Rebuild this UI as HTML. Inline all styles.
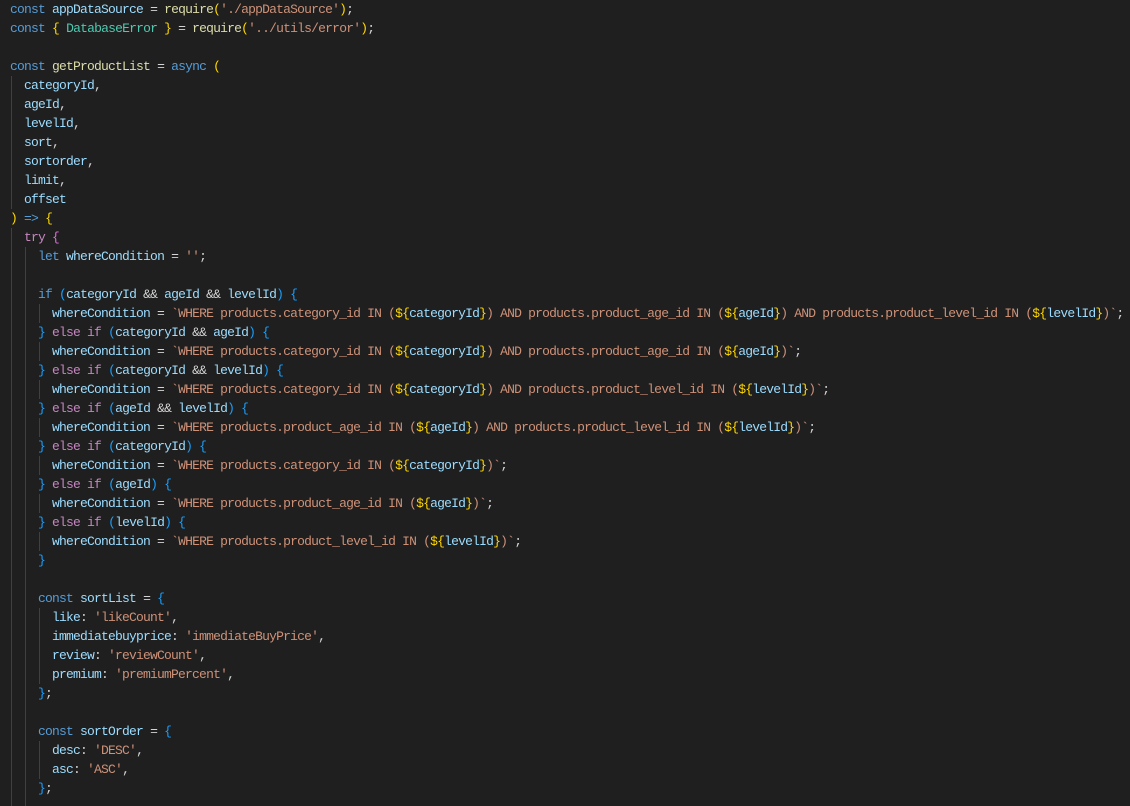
<!DOCTYPE html>
<html><head><meta charset="utf-8"><style>
html,body{margin:0;padding:0;background:#1f1f1f;width:1130px;height:806px;overflow:hidden}
#c{position:relative;font-family:"Liberation Mono",monospace;font-size:13px;letter-spacing:-0.8px;color:#d4d4d4}
.l{height:19px;line-height:19px;white-space:pre;padding-left:10px}
.k{color:#569cd6}.v{color:#9cdcfe}.f{color:#dcdcaa}.s{color:#ce9178}.t{color:#4ec9b0}
.c{color:#c586c0}.y{color:#ffd700}.p{color:#da70d6}.b{color:#179fff}.w{color:#d4d4d4}
.g{position:absolute;width:1px;background:#404040}
</style></head><body><div id="c">
<div class="g" style="left:11px;top:76px;height:133px"></div>
<div class="g" style="left:11px;top:228px;height:578px"></div>
<div class="g" style="left:25px;top:247px;height:559px"></div>
<div class="g" style="left:39px;top:304px;height:19px"></div>
<div class="g" style="left:39px;top:342px;height:19px"></div>
<div class="g" style="left:39px;top:380px;height:19px"></div>
<div class="g" style="left:39px;top:418px;height:19px"></div>
<div class="g" style="left:39px;top:456px;height:19px"></div>
<div class="g" style="left:39px;top:494px;height:19px"></div>
<div class="g" style="left:39px;top:532px;height:19px"></div>
<div class="g" style="left:39px;top:608px;height:76px"></div>
<div class="g" style="left:39px;top:741px;height:38px"></div>
<div class="l"><span class="k">const</span> <span class="v">appDataSource</span> = <span class="f">require</span><span class="y">(</span><span class="s">'./appDataSource'</span><span class="y">)</span>;</div>
<div class="l"><span class="k">const</span> <span class="y">{</span> <span class="t">DatabaseError</span> <span class="y">}</span> = <span class="f">require</span><span class="y">(</span><span class="s">'../utils/error'</span><span class="y">)</span>;</div>
<div class="l"></div>
<div class="l"><span class="k">const</span> <span class="f">getProductList</span> = <span class="k">async</span> <span class="y">(</span></div>
<div class="l">  <span class="v">categoryId</span>,</div>
<div class="l">  <span class="v">ageId</span>,</div>
<div class="l">  <span class="v">levelId</span>,</div>
<div class="l">  <span class="v">sort</span>,</div>
<div class="l">  <span class="v">sortorder</span>,</div>
<div class="l">  <span class="v">limit</span>,</div>
<div class="l">  <span class="v">offset</span></div>
<div class="l"><span class="y">)</span> <span class="k">=&gt;</span> <span class="y">{</span></div>
<div class="l">  <span class="c">try</span> <span class="p">{</span></div>
<div class="l">    <span class="k">let</span> <span class="v">whereCondition</span> = <span class="s">''</span>;</div>
<div class="l"></div>
<div class="l">    <span class="k">if</span> <span class="b">(</span><span class="v">categoryId</span> &amp;&amp; <span class="v">ageId</span> &amp;&amp; <span class="v">levelId</span><span class="b">)</span> <span class="b">{</span></div>
<div class="l">      <span class="v">whereCondition</span> = <span class="s">`WHERE products.category_id IN (</span><span class="y">${</span><span class="v">categoryId</span><span class="y">}</span><span class="s">) AND products.product_age_id IN (</span><span class="y">${</span><span class="v">ageId</span><span class="y">}</span><span class="s">) AND products.product_level_id IN (</span><span class="y">${</span><span class="v">levelId</span><span class="y">}</span><span class="s">)`</span>;</div>
<div class="l">    <span class="b">}</span> <span class="c">else if</span> <span class="b">(</span><span class="v">categoryId</span> &amp;&amp; <span class="v">ageId</span><span class="b">)</span> <span class="b">{</span></div>
<div class="l">      <span class="v">whereCondition</span> = <span class="s">`WHERE products.category_id IN (</span><span class="y">${</span><span class="v">categoryId</span><span class="y">}</span><span class="s">) AND products.product_age_id IN (</span><span class="y">${</span><span class="v">ageId</span><span class="y">}</span><span class="s">)`</span>;</div>
<div class="l">    <span class="b">}</span> <span class="c">else if</span> <span class="b">(</span><span class="v">categoryId</span> &amp;&amp; <span class="v">levelId</span><span class="b">)</span> <span class="b">{</span></div>
<div class="l">      <span class="v">whereCondition</span> = <span class="s">`WHERE products.category_id IN (</span><span class="y">${</span><span class="v">categoryId</span><span class="y">}</span><span class="s">) AND products.product_level_id IN (</span><span class="y">${</span><span class="v">levelId</span><span class="y">}</span><span class="s">)`</span>;</div>
<div class="l">    <span class="b">}</span> <span class="c">else if</span> <span class="b">(</span><span class="v">ageId</span> &amp;&amp; <span class="v">levelId</span><span class="b">)</span> <span class="b">{</span></div>
<div class="l">      <span class="v">whereCondition</span> = <span class="s">`WHERE products.product_age_id IN (</span><span class="y">${</span><span class="v">ageId</span><span class="y">}</span><span class="s">) AND products.product_level_id IN (</span><span class="y">${</span><span class="v">levelId</span><span class="y">}</span><span class="s">)`</span>;</div>
<div class="l">    <span class="b">}</span> <span class="c">else if</span> <span class="b">(</span><span class="v">categoryId</span><span class="b">)</span> <span class="b">{</span></div>
<div class="l">      <span class="v">whereCondition</span> = <span class="s">`WHERE products.category_id IN (</span><span class="y">${</span><span class="v">categoryId</span><span class="y">}</span><span class="s">)`</span>;</div>
<div class="l">    <span class="b">}</span> <span class="c">else if</span> <span class="b">(</span><span class="v">ageId</span><span class="b">)</span> <span class="b">{</span></div>
<div class="l">      <span class="v">whereCondition</span> = <span class="s">`WHERE products.product_age_id IN (</span><span class="y">${</span><span class="v">ageId</span><span class="y">}</span><span class="s">)`</span>;</div>
<div class="l">    <span class="b">}</span> <span class="c">else if</span> <span class="b">(</span><span class="v">levelId</span><span class="b">)</span> <span class="b">{</span></div>
<div class="l">      <span class="v">whereCondition</span> = <span class="s">`WHERE products.product_level_id IN (</span><span class="y">${</span><span class="v">levelId</span><span class="y">}</span><span class="s">)`</span>;</div>
<div class="l">    <span class="b">}</span></div>
<div class="l"></div>
<div class="l">    <span class="k">const</span> <span class="v">sortList</span> = <span class="b">{</span></div>
<div class="l">      <span class="v">like</span>: <span class="s">'likeCount'</span>,</div>
<div class="l">      <span class="v">immediatebuyprice</span>: <span class="s">'immediateBuyPrice'</span>,</div>
<div class="l">      <span class="v">review</span>: <span class="s">'reviewCount'</span>,</div>
<div class="l">      <span class="v">premium</span>: <span class="s">'premiumPercent'</span>,</div>
<div class="l">    <span class="b">}</span>;</div>
<div class="l"></div>
<div class="l">    <span class="k">const</span> <span class="v">sortOrder</span> = <span class="b">{</span></div>
<div class="l">      <span class="v">desc</span>: <span class="s">'DESC'</span>,</div>
<div class="l">      <span class="v">asc</span>: <span class="s">'ASC'</span>,</div>
<div class="l">    <span class="b">}</span>;</div>
</div></body></html>
